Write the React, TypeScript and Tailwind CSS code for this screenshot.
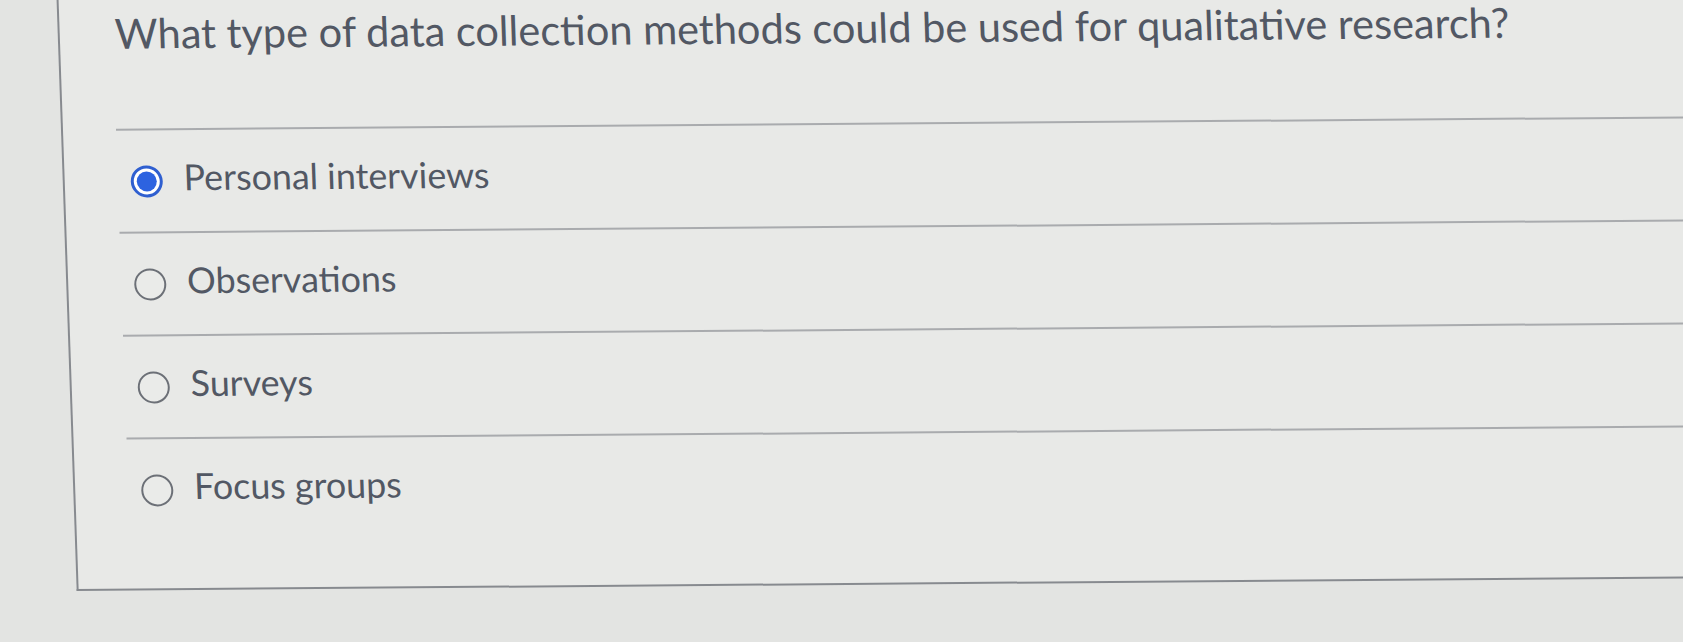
import React from "react";

const options = [
  { label: "Personal interviews", checked: true },
  { label: "Observations", checked: false },
  { label: "Surveys", checked: false },
  { label: "Focus groups", checked: false },
];

function Radio({ checked }: { checked: boolean }) {
  if (checked) {
    return (
      <span className="flex h-[32px] w-[32px] shrink-0 items-center justify-center rounded-full border-[3px] border-[#2f5fd0] bg-white">
        <span className="h-[20px] w-[20px] rounded-full bg-[#2d63e0]" />
      </span>
    );
  }
  return (
    <span className="h-[32px] w-[32px] shrink-0 rounded-full border-2 border-[#6c7077] bg-[#eaebe9]" />
  );
}

export default function App() {
  return (
    <div
      className="h-[642px] w-[1683px] overflow-hidden bg-[#e3e4e2]"
      style={{ fontFamily: "Lato, 'Open Sans', 'Liberation Sans', sans-serif" }}
    >
      <div className="h-[642px] w-[1683px] origin-center -rotate-[0.45deg] skew-x-[1.5deg] pl-[67px]">
        <div className="-mt-[20px] h-[605px] w-[1720px] border-b-2 border-l-2 border-[#878a8f] bg-[#e8e9e7] pl-[53px] pt-[27px]">
          <h1 className="pl-[2px] text-[41.5px] font-normal leading-[40px] text-[#525864]">
            What type of data collection methods could be used for qualitative research?
          </h1>
          <div className="mt-[76px]">
            {options.map((o) => (
              <div
                key={o.label}
                className="flex h-[103px] items-center border-t-2 border-[#a9abae] pl-[13px]"
              >
                <Radio checked={o.checked} />
                <span className="mb-[8px] ml-[21px] text-[35.8px] leading-[42px] text-[#525864]">
                  {o.label}
                </span>
              </div>
            ))}
          </div>
        </div>
      </div>
    </div>
  );
}
